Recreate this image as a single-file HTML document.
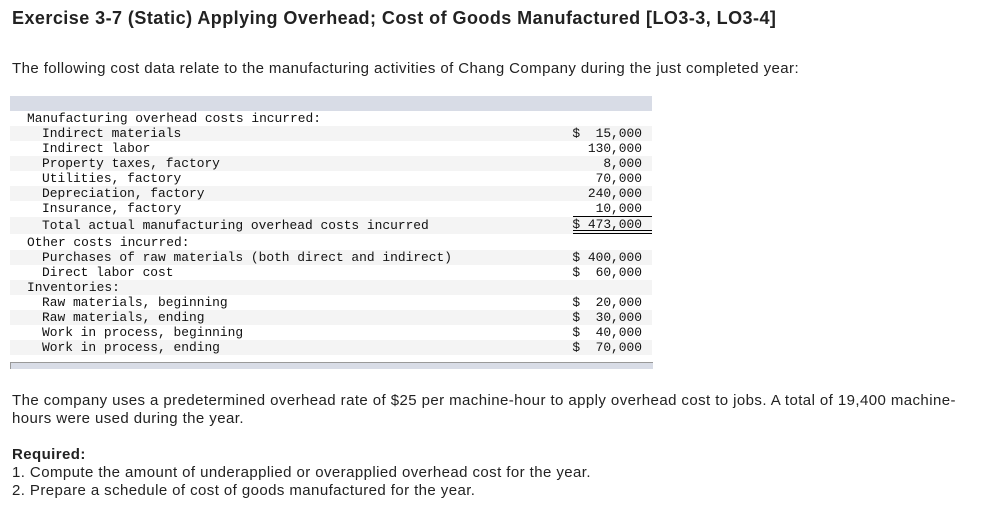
<!DOCTYPE html>
<html><head><meta charset="utf-8"><style>
body{margin:0;background:#fff;width:1007px;height:511px;overflow:hidden;font-family:"Liberation Sans",sans-serif;color:#222;position:relative}
.a{position:absolute;white-space:nowrap}
.t{left:12px;top:8px;font-size:18px;font-weight:bold;letter-spacing:0.45px}
.p{font-size:15px;left:12px;letter-spacing:0.42px}
.tbl{position:absolute;left:10px;top:96px;width:642px}
.hd{height:15px;background:#d8dce6}
.r{height:15px;position:relative;font-family:"Liberation Mono",monospace;font-size:12.9px;line-height:16px;color:#111}
.g{background:#f4f4f4}
.r span{position:absolute}
.l1{left:17px}.l2{left:32px}
.v{right:10px;text-align:right;width:70px}
.bt{position:absolute;left:10px;top:362px;width:642px;height:6px;background:#d8dce6;border-left:1px solid #999;border-top:1px solid #999}
</style></head><body>
<div class="a t">Exercise 3-7 (Static) Applying Overhead; Cost of Goods Manufactured [LO3-3, LO3-4]</div>
<div class="a p" style="top:60px">The following cost data relate to the manufacturing activities of Chang Company during the just completed year:</div>
<div class="tbl">
<div class="hd"></div>
<div class="r"><span class="l1">Manufacturing overhead costs incurred:</span></div>
<div class="r g"><span class="l2">Indirect materials</span><span class="v">$&nbsp; 15,000</span></div>
<div class="r"><span class="l2">Indirect labor</span><span class="v">130,000</span></div>
<div class="r g"><span class="l2">Property taxes, factory</span><span class="v">8,000</span></div>
<div class="r"><span class="l2">Utilities, factory</span><span class="v">70,000</span></div>
<div class="r g"><span class="l2">Depreciation, factory</span><span class="v">240,000</span></div>
<div class="r" style="height:16px"><span class="l2">Insurance, factory</span><span class="v">10,000</span><div style="position:absolute;left:563px;right:0;bottom:0;border-bottom:1px solid #000"></div></div>
<div class="r g" style="height:17px;line-height:18px"><span class="l2">Total actual manufacturing overhead costs incurred</span><span class="v" style="top:-1px">$ 473,000</span><div style="position:absolute;left:563px;right:0;bottom:0;height:2px;border-top:1px solid #000;border-bottom:1px solid #000"></div></div>
<div class="r" style="height:16px;line-height:18px"><span class="l1">Other costs incurred:</span></div>
<div class="r g"><span class="l2">Purchases of raw materials (both direct and indirect)</span><span class="v">$ 400,000</span></div>
<div class="r"><span class="l2">Direct labor cost</span><span class="v">$&nbsp; 60,000</span></div>
<div class="r g"><span class="l1">Inventories:</span></div>
<div class="r"><span class="l2">Raw materials, beginning</span><span class="v">$&nbsp; 20,000</span></div>
<div class="r g"><span class="l2">Raw materials, ending</span><span class="v">$&nbsp; 30,000</span></div>
<div class="r"><span class="l2">Work in process, beginning</span><span class="v">$&nbsp; 40,000</span></div>
<div class="r g"><span class="l2">Work in process, ending</span><span class="v">$&nbsp; 70,000</span></div>
</div>
<div class="bt"></div>
<div class="a p" style="top:392px">The company uses a predetermined overhead rate of $25 per machine-hour to apply overhead cost to jobs. A total of 19,400 machine-</div>
<div class="a p" style="top:410px">hours were used during the year.</div>
<div class="a p" style="top:446px;font-weight:bold">Required:</div>
<div class="a p" style="top:464px">1. Compute the amount of underapplied or overapplied overhead cost for the year.</div>
<div class="a p" style="top:482px">2. Prepare a schedule of cost of goods manufactured for the year.</div>
</body></html>
